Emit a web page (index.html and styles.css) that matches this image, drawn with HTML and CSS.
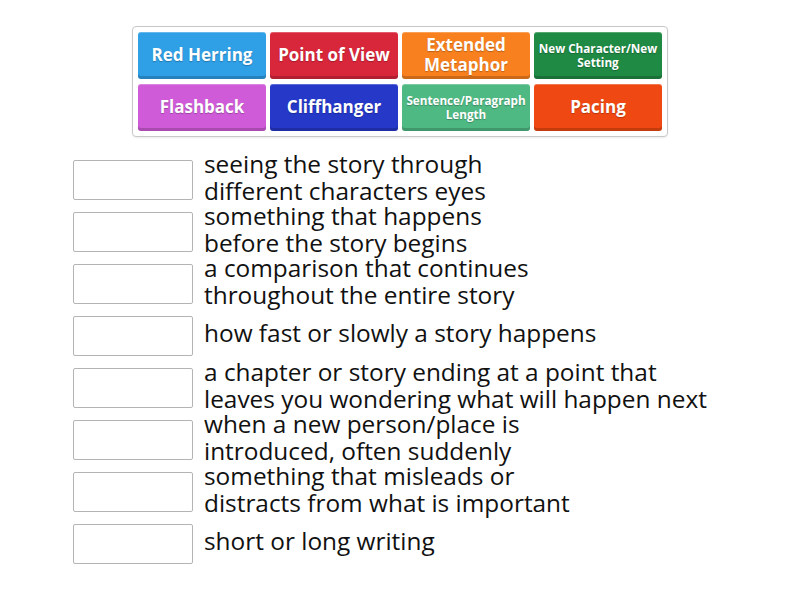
FILE: index.html
```html
<!DOCTYPE html>
<html>
<head>
<meta charset="utf-8">
<link rel="stylesheet" href="styles.css">
</head>
<body>
<div class="page">
  <div class="bank">
    <div class="tile t-blue">Red Herring</div>
    <div class="tile t-red">Point of View</div>
    <div class="tile t-orange">Extended Metaphor</div>
    <div class="tile t-green small">New Character/New Setting</div>
    <div class="tile t-magenta">Flashback</div>
    <div class="tile t-navy">Cliffhanger</div>
    <div class="tile t-teal small">Sentence/Paragraph Length</div>
    <div class="tile t-vermil">Pacing</div>
  </div>
  <div class="answers">
    <div class="row"><div class="slot"></div><div class="def">seeing the story through<br>different characters eyes</div></div>
    <div class="row"><div class="slot"></div><div class="def">something that happens<br>before the story begins</div></div>
    <div class="row"><div class="slot"></div><div class="def">a comparison that continues<br>throughout the entire story</div></div>
    <div class="row"><div class="slot"></div><div class="def">how fast or slowly a story happens</div></div>
    <div class="row"><div class="slot"></div><div class="def">a chapter or story ending at a point that<br>leaves you wondering what will happen next</div></div>
    <div class="row"><div class="slot"></div><div class="def">when a new person/place is<br>introduced, often suddenly</div></div>
    <div class="row"><div class="slot"></div><div class="def">something that misleads or<br>distracts from what is important</div></div>
    <div class="row"><div class="slot"></div><div class="def">short or long writing</div></div>
  </div>
</div>
</body>
</html>
```
FILE: styles.css
```css
html, body {
  margin: 0;
  padding: 0;
  background: #ffffff;
}
body {
  font-family: "Open Sans", "Noto Sans", sans-serif;
  color: #111111;
}
.page {
  width: 800px;
  height: 600px;
  padding-top: 26px;
  box-sizing: border-box;
}
.bank {
  width: 524px;
  margin: 0 auto;
  padding: 5px;
  border: 1px solid #c8c8c8;
  border-radius: 4px;
  display: grid;
  grid-template-columns: repeat(4, 128px);
  grid-auto-rows: 47px;
  column-gap: 4px;
  row-gap: 5px;
  box-shadow: 0 1px 2px rgba(0,0,0,0.08);
}
.tile {
  border-radius: 3px;
  color: #ffffff;
  font-weight: 700;
  font-size: 17px;
  line-height: 20px;
  display: flex;
  align-items: center;
  justify-content: center;
  text-align: center;
  padding: 0 2px 2px;
  box-sizing: border-box;
  text-shadow: 0 1px 1px rgba(0,0,0,0.25);
  box-shadow: inset 0 -3px 0 rgba(0,0,0,0.18), inset 0 1px 0 rgba(255,255,255,0.25);
}
.tile.small {
  font-size: 11.7px;
  line-height: 14px;
}
.t-blue { background: #2f9fe6; }
.t-red { background: #d8263b; }
.t-orange { background: #f8801e; }
.t-green { background: #1f8a44; }
.t-magenta { background: #cf5bd8; }
.t-navy { background: #2538c8; }
.t-teal { background: #4fb983; }
.t-vermil { background: #f04812; }

.answers {
  margin-top: 23px;
  padding-left: 73px;
  display: flex;
  flex-direction: column;
  gap: 12px;
}
.row {
  display: flex;
  align-items: center;
  height: 40px;
}
.slot {
  width: 120px;
  height: 40px;
  box-sizing: border-box;
  border: 1px solid #b4b4b4;
  border-radius: 2px;
  background: #ffffff;
  flex: none;
}
.def {
  margin-left: 11px;
  padding-bottom: 7px;
  font-size: 24.4px;
  line-height: 27px;
  color: #111111;
  white-space: nowrap;
}
```
